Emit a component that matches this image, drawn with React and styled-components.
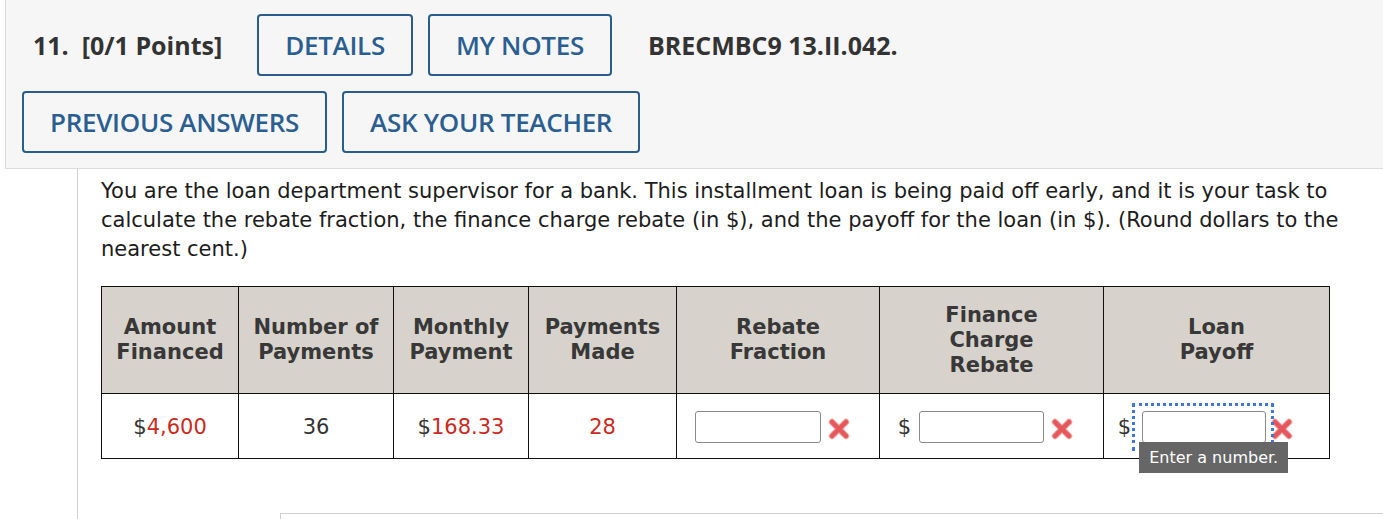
import React from 'react';
import styled, { createGlobalStyle } from 'styled-components';

const GlobalStyle = createGlobalStyle`
  body {
    margin: 0;
    background: #fff;
    font-family: "DejaVu Sans", Verdana, sans-serif;
    overflow: hidden;
  }
`;

const Page = styled.div`
  width: 1383px;
  height: 519px;
  overflow: hidden;
`;

const Header = styled.div`
  margin-left: 5px;
  margin-top: -10px;
  padding: 24px 0 15px 0;
  background: #f6f6f6;
  border-left: 1px solid #dcdcdc;
  border-bottom: 1px solid #dcdcdc;
  display: flex;
  flex-direction: column;
  gap: 15px;
`;

const Row = styled.div`
  display: flex;
  align-items: center;
  padding-left: ${p => p.$indent}px;
`;

const Label = styled.span`
  font-family: "Open Sans", sans-serif;
  font-weight: 700;
  font-size: 25px;
  color: #333;
  margin-left: ${p => p.$before || 0}px;
  margin-right: ${p => p.$after || 0}px;
  white-space: pre;
`;

const Button = styled.button`
  height: 62px;
  padding: 0 26px;
  margin-right: 15px;
  background: transparent;
  border: 2px solid #2a5c8e;
  border-radius: 4px;
  font-family: "Open Sans", sans-serif;
  font-weight: 600;
  font-size: 26px;
  color: #2b5e91;
  letter-spacing: -0.3px;
  cursor: pointer;
`;

const Content = styled.div`
  margin-left: 77px;
  border-left: 1px solid #cfcfcf;
  padding: 8px 0 0 23px;
  height: 400px;
`;

const Prompt = styled.p`
  margin: 0 0 22px 0;
  font-size: 21px;
  line-height: 29px;
  color: #1c1c1c;
  width: 1268px;
`;

const Table = styled.table`
  border-collapse: collapse;
  width: 1228px;
  table-layout: fixed;
`;

const Th = styled.th`
  box-sizing: border-box;
  width: ${p => p.$w}px;
  height: 107px;
  background: #d7d3cc;
  border: 1px solid #111;
  font-size: 21px;
  line-height: 25px;
  font-weight: 700;
  color: #383838;
  text-align: center;
  padding: 0;
`;

const Td = styled.td`
  box-sizing: border-box;
  height: 65px;
  border: 1px solid #111;
  font-size: 21px;
  color: #333;
  text-align: center;
  padding: 2px 0 0 0;
`;

const Red = styled.span`
  color: #cc2a1e;
`;

const AnswerCell = styled.div`
  display: flex;
  align-items: center;
  justify-content: center;
`;

const Dollar = styled.span`
  font-size: 21px;
  color: #333;
  margin-right: 8px;
`;

const Input = styled.input`
  width: ${p => p.$w || 126}px;
  height: 32px;
  box-sizing: border-box;
  border: 1px solid #8a8a8a;
  border-radius: 3px;
  background: #fff;
  outline: none;
`;

const Focus = styled.div`
  position: relative;
  padding: 5px 5px 5px 7px;
  margin-left: -7px;
  border: 3px dotted #3b78d8;
  display: flex;
`;

const Tooltip = styled.div`
  position: absolute;
  left: 4px;
  top: 36px;
  background: #666;
  color: #fff;
  font-size: 16px;
  line-height: 19px;
  padding: 6px 10px;
  white-space: nowrap;
  z-index: 2;
`;

const Wrong = styled.span`
  display: inline-flex;
  margin-left: ${p => p.$ml ?? 7}px;
  margin-right: ${p => p.$mr ?? 12}px;
  margin-top: 4px;
`;

const Next = styled.div`
  margin: 54px 0 0 179px;
  border-top: 1px solid #cfcfcf;
  border-left: 1px solid #cfcfcf;
  height: 40px;
`;

const XIcon = () => (
  <svg width="22" height="22" viewBox="0 0 22 22">
    <g stroke="#f4a3a3" strokeWidth="6.5" strokeLinecap="round">
      <line x1="4" y1="4" x2="18" y2="18" />
      <line x1="18" y1="4" x2="4" y2="18" />
    </g>
    <g stroke="#e4585b" strokeWidth="4.5" strokeLinecap="round">
      <line x1="4" y1="4" x2="18" y2="18" />
      <line x1="18" y1="4" x2="4" y2="18" />
    </g>
  </svg>
);

const heads = [
  [137, ['Amount', 'Financed']],
  [155, ['Number of', 'Payments']],
  [135, ['Monthly', 'Payment']],
  [148, ['Payments', 'Made']],
  [203, ['Rebate', 'Fraction']],
  [224, ['Finance', 'Charge', 'Rebate']],
  [226, ['Loan', 'Payoff']],
];

export default function App() {
  return (
    <Page>
      <GlobalStyle />
      <Header>
        <Row $indent={27}>
          <Label $after={35}>11.  [0/1 Points]</Label>
          <Button>DETAILS</Button>
          <Button>MY NOTES</Button>
          <Label $before={21}>BRECMBC9 13.II.042.</Label>
        </Row>
        <Row $indent={16}>
          <Button>PREVIOUS ANSWERS</Button>
          <Button>ASK YOUR TEACHER</Button>
        </Row>
      </Header>
      <Content>
        <Prompt>
          You are the loan department supervisor for a bank. This installment loan is being paid off early, and it is your task to
          calculate the rebate fraction, the finance charge rebate (in $), and the payoff for the loan (in $). (Round dollars to the
          nearest cent.)
        </Prompt>
        <Table>
          <thead>
            <tr>
              {heads.map(([w, lines]) => (
                <Th key={lines.join()} $w={w}>
                  {lines.map((l, i) => (
                    <React.Fragment key={l}>
                      {i > 0 && <br />}
                      {l}
                    </React.Fragment>
                  ))}
                </Th>
              ))}
            </tr>
          </thead>
          <tbody>
            <tr>
              <Td>$<Red>4,600</Red></Td>
              <Td>36</Td>
              <Td>$<Red>168.33</Red></Td>
              <Td><Red>28</Red></Td>
              <Td>
                <AnswerCell>
                  <Input />
                  <Wrong><XIcon /></Wrong>
                </AnswerCell>
              </Td>
              <Td>
                <AnswerCell>
                  <Dollar>$</Dollar>
                  <Input $w={125} />
                  <Wrong><XIcon /></Wrong>
                </AnswerCell>
              </Td>
              <Td>
                <AnswerCell>
                  <Dollar>$</Dollar>
                  <Focus>
                    <Input $w={124} />
                    <Tooltip>Enter a number.</Tooltip>
                  </Focus>
                  <Wrong $ml={-3} $mr={22}><XIcon /></Wrong>
                </AnswerCell>
              </Td>
            </tr>
          </tbody>
        </Table>
        <Next />
      </Content>
    </Page>
  );
}
